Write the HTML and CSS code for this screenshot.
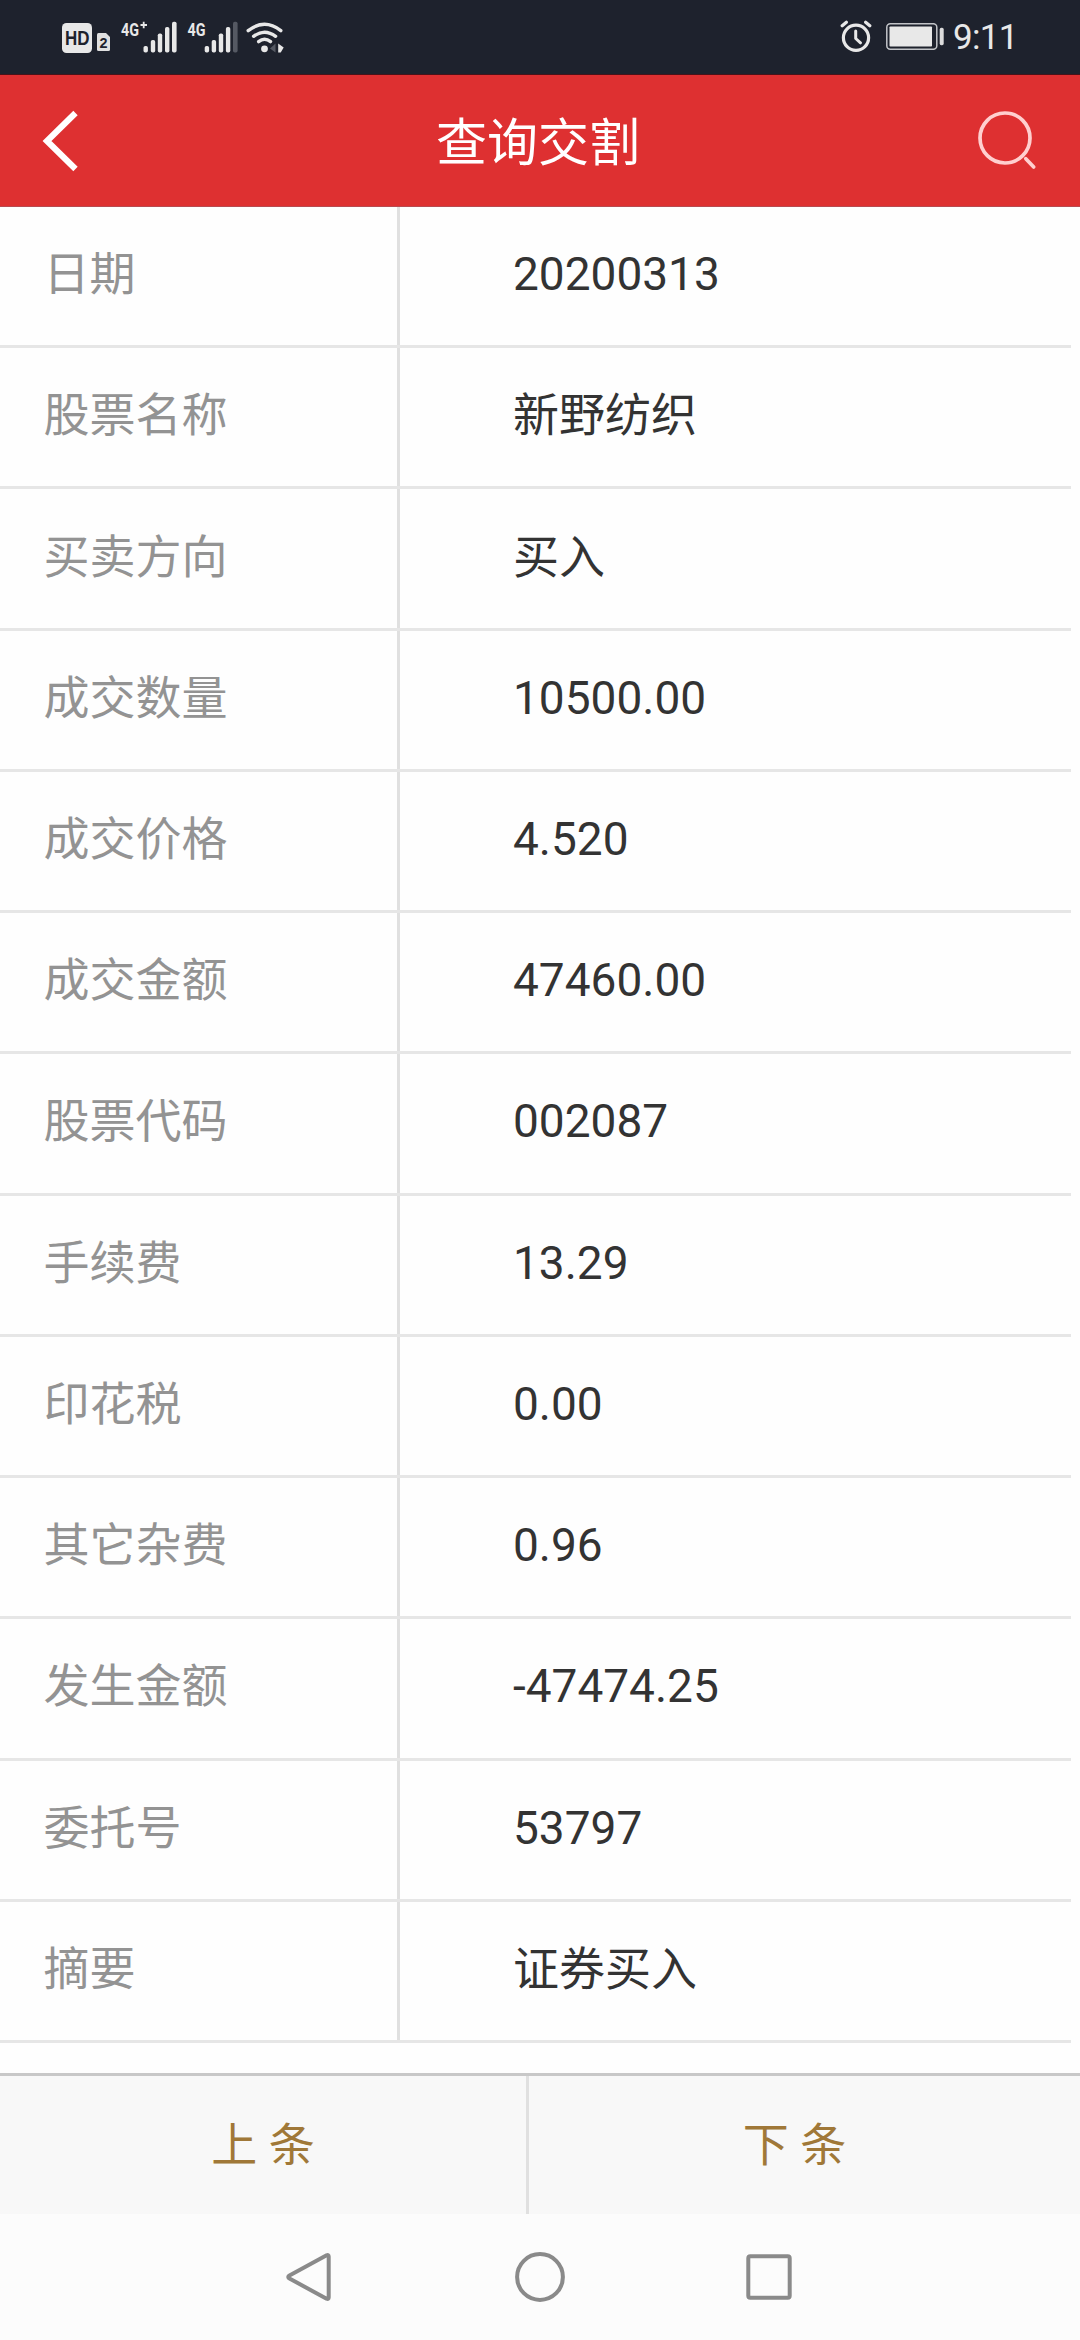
FILE: index.html
```html
<!DOCTYPE html>
<html lang="zh-CN">
<head>
<meta charset="utf-8">
<title>查询交割</title>
<link rel="stylesheet" href="styles.css">
</head>
<body>
<div class="screen">
  <div class="status">
    <svg class="status-left" viewBox="62 18 224 38" width="224" height="38">
      <rect x="62" y="23" width="30" height="30" rx="4.5" fill="#e8e8e8"/>
      <text class="hd" x="65" y="45" textLength="24.5" lengthAdjust="spacingAndGlyphs">HD</text>
      <path d="M98.500 33H106L110 37V49.500a1.500 1.500 0 0 1-1.500 1.500H98.500a1.500 1.500 0 0 1-1.500-1.500V34.500a1.500 1.500 0 0 1 1.500-1.500z" fill="#e0e0e0"/>
      <text class="sim" x="99.500" y="47.800" textLength="8" lengthAdjust="spacingAndGlyphs">2</text>
      <text class="net" x="121" y="35.700" textLength="18" lengthAdjust="spacingAndGlyphs">4G</text>
      <path d="M140.500 25H147M143.700 21.700V28.300" stroke="#e8e8e8" stroke-width="1.800" fill="none"/>
      <g fill="#e8e8e8">
        <rect x="143.500" y="46" width="4.400" height="6.500" rx="1.800"/>
        <rect x="150.800" y="40" width="4.400" height="12.500" rx="1.800"/>
        <rect x="157.800" y="33.500" width="4.400" height="19" rx="1.800"/>
        <rect x="165" y="27" width="4.400" height="25.500" rx="1.800"/>
        <rect x="172" y="21.800" width="4.600" height="30.700" rx="1.800"/>
        <rect x="204.700" y="46" width="4.400" height="6.500" rx="1.800"/>
        <rect x="211.700" y="40" width="4.400" height="12.500" rx="1.800"/>
        <rect x="218.800" y="33.500" width="4.400" height="19" rx="1.800"/>
        <rect x="225.900" y="27" width="4.400" height="25.500" rx="1.800"/>
        <rect x="233" y="21.800" width="4.600" height="30.700" rx="1.800" fill="#555963"/>
      </g>
      <text class="net" x="187.500" y="35.700" textLength="18" lengthAdjust="spacingAndGlyphs">4G</text>
      <g fill="none" stroke="#e8e8e8" stroke-width="3.400" stroke-linecap="round">
        <path d="M248.200 30.600Q264.500 18 280.800 30.600"/>
        <path d="M253.600 36.300Q264.500 28 275.600 36.300"/>
        <path d="M258.600 41.600Q264.500 37 270.600 41.600"/>
      </g>
      <circle cx="264.500" cy="48.800" r="3.400" fill="#e8e8e8"/>
      <path d="M275.500 43.500V52.500L270 48.500z" fill="#555963"/>
      <path d="M278.200 43.500L283.700 47.500L280.700 52.500H278.200z" fill="#e8e8e8"/>
    </svg>
    <div class="status-right">
      <svg viewBox="840 19 106 38" width="106" height="38">
        <circle cx="856" cy="38.800" r="12.600" fill="none" stroke="#e8e8e8" stroke-width="3.200"/>
        <path d="M855.700 32V39.500L860.500 43.800" fill="none" stroke="#e8e8e8" stroke-width="3" stroke-linecap="round" stroke-linejoin="round"/>
        <path d="M842.200 26.800L846.400 23.200M869.800 26.800L865.600 23.200" stroke="#e8e8e8" stroke-width="3.200" stroke-linecap="round"/>
        <rect x="886.800" y="24.800" width="50" height="25.400" rx="3.500" fill="none" stroke="#c2c4c8" stroke-width="1.500"/>
        <rect x="889.500" y="27.500" width="42.500" height="20" rx="0.800" fill="#e8e8e8"/>
        <rect x="939.700" y="28.800" width="4" height="17.400" rx="1.600" fill="#dcdcdc"/>
      </svg>
      <span class="clock">9:11</span>
    </div>
  </div>

  <header class="header">
    <svg viewBox="0 0 44 66" width="44" height="66"><path d="M37.500 5L9 33L37.500 61" fill="none" stroke="#fff" stroke-width="6.200"/></svg>
    <h1 class="title">查询交割</h1>
    <svg viewBox="0 0 62 62" width="62" height="62" fill="none" stroke="#ffcfcf" stroke-width="3.700" stroke-linecap="round"><circle cx="29" cy="28" r="25"/><path d="M49.800 48.700L57.700 57"/></svg>
  </header>

  <main class="list">
    <div class="row"><div class="label">日期</div><div class="value">20200313</div></div>
    <div class="row"><div class="label">股票名称</div><div class="value">新野纺织</div></div>
    <div class="row"><div class="label">买卖方向</div><div class="value">买入</div></div>
    <div class="row"><div class="label">成交数量</div><div class="value">10500.00</div></div>
    <div class="row"><div class="label">成交价格</div><div class="value">4.520</div></div>
    <div class="row"><div class="label">成交金额</div><div class="value">47460.00</div></div>
    <div class="row"><div class="label">股票代码</div><div class="value">002087</div></div>
    <div class="row"><div class="label">手续费</div><div class="value">13.29</div></div>
    <div class="row"><div class="label">印花税</div><div class="value">0.00</div></div>
    <div class="row"><div class="label">其它杂费</div><div class="value">0.96</div></div>
    <div class="row"><div class="label">发生金额</div><div class="value">-47474.25</div></div>
    <div class="row"><div class="label">委托号</div><div class="value">53797</div></div>
    <div class="row"><div class="label">摘要</div><div class="value">证券买入</div></div>
  </main>

  <div class="actions">
    <div class="action">上 条</div>
    <div class="action">下 条</div>
  </div>

  <nav class="nav">
    <svg viewBox="3 0 54 54" width="54" height="54"><path d="M45.600 5.300Q47.700 4.500 47.700 6.500V47.500Q47.700 49.500 45.600 48.700L8 28.300Q6.500 27 8 25.700z" fill="none" stroke="#8a8a8a" stroke-width="4" stroke-linejoin="round"/></svg>
    <svg viewBox="0 0 54 54" width="54" height="54"><circle cx="27" cy="27" r="22.900" fill="none" stroke="#8a8a8a" stroke-width="4"/></svg>
    <svg viewBox="0 0 54 54" width="54" height="54"><rect x="6.300" y="6.300" width="41.400" height="41.400" rx="2" fill="none" stroke="#8a8a8a" stroke-width="4"/></svg>
  </nav>
</div>
</body>
</html>
```
FILE: styles.css
```css
* { box-sizing: border-box; }

body {
  margin: 0;
  background: #fefefe;
  font-family: Roboto, "Noto Sans CJK SC", sans-serif;
}

svg { display: block; }

.screen {
  display: flex;
  flex-direction: column;
  width: 1080px;
  height: 2340px;
}

.status {
  display: flex;
  justify-content: space-between;
  align-items: center;
  height: 75px;
  padding: 0 64px 0 62px;
  background: #1e222d;
  border-bottom: 1px solid #4a1219;
}

.hd { font: bold 20px "Liberation Sans", sans-serif; fill: #1e222d; }
.sim { font: bold 15px "Liberation Sans", sans-serif; fill: #1e222d; }
.net { font: bold 18.5px Roboto, sans-serif; fill: #e8e8e8; }

.status-right {
  display: flex;
  align-items: center;
  gap: 7px;
}

.clock {
  width: 63px;
  padding-top: 2px;
  font-size: 35px;
  line-height: 38px;
  letter-spacing: -0.7px;
  white-space: nowrap;
  color: #e8e8e8;
}

.header {
  display: grid;
  grid-template-columns: 62px 1fr 62px;
  align-items: center;
  height: 132px;
  padding: 0 42px 0 38px;
  background: #de3031;
  border-bottom: 1px solid #b84a50;
}

.title {
  margin: 0;
  padding-top: 6px;
  font-size: 51px;
  font-weight: 400;
  line-height: 60px;
  text-align: center;
  color: #fff;
}

.list {
  display: grid;
  grid-template-rows: repeat(13, 1fr);
  width: 1071px;
  height: 1836px;
}

.row {
  display: grid;
  grid-template-columns: 400px 1fr;
  border-bottom: 3px solid #e6e6e6;
  font-size: 46px;
  line-height: 54px;
}

.label {
  display: flex;
  align-items: center;
  padding: 0 0 4px 43.5px;
  border-right: 3px solid #e0e0e0;
  color: #939393;
}

.value {
  display: flex;
  align-items: center;
  padding: 0 0 4px 113px;
  color: #333;
}

.actions {
  display: flex;
  height: 141px;
  margin-top: 30px;
  padding-right: 20px;
  background: #f8f8f8;
  border-top: 3px solid #c8c8c8;
}

.action {
  flex: 1;
  display: flex;
  justify-content: center;
  align-items: center;
  padding-bottom: 8px;
  font-size: 46px;
  color: #a07838;
}

.action:first-child {
  flex: 0 0 529px;
  border-right: 3px solid #e0e0e0;
}

.nav {
  display: flex;
  justify-content: center;
  align-items: center;
  gap: 175px;
  height: 126px;
  background: #fcfcfc;
}
```
